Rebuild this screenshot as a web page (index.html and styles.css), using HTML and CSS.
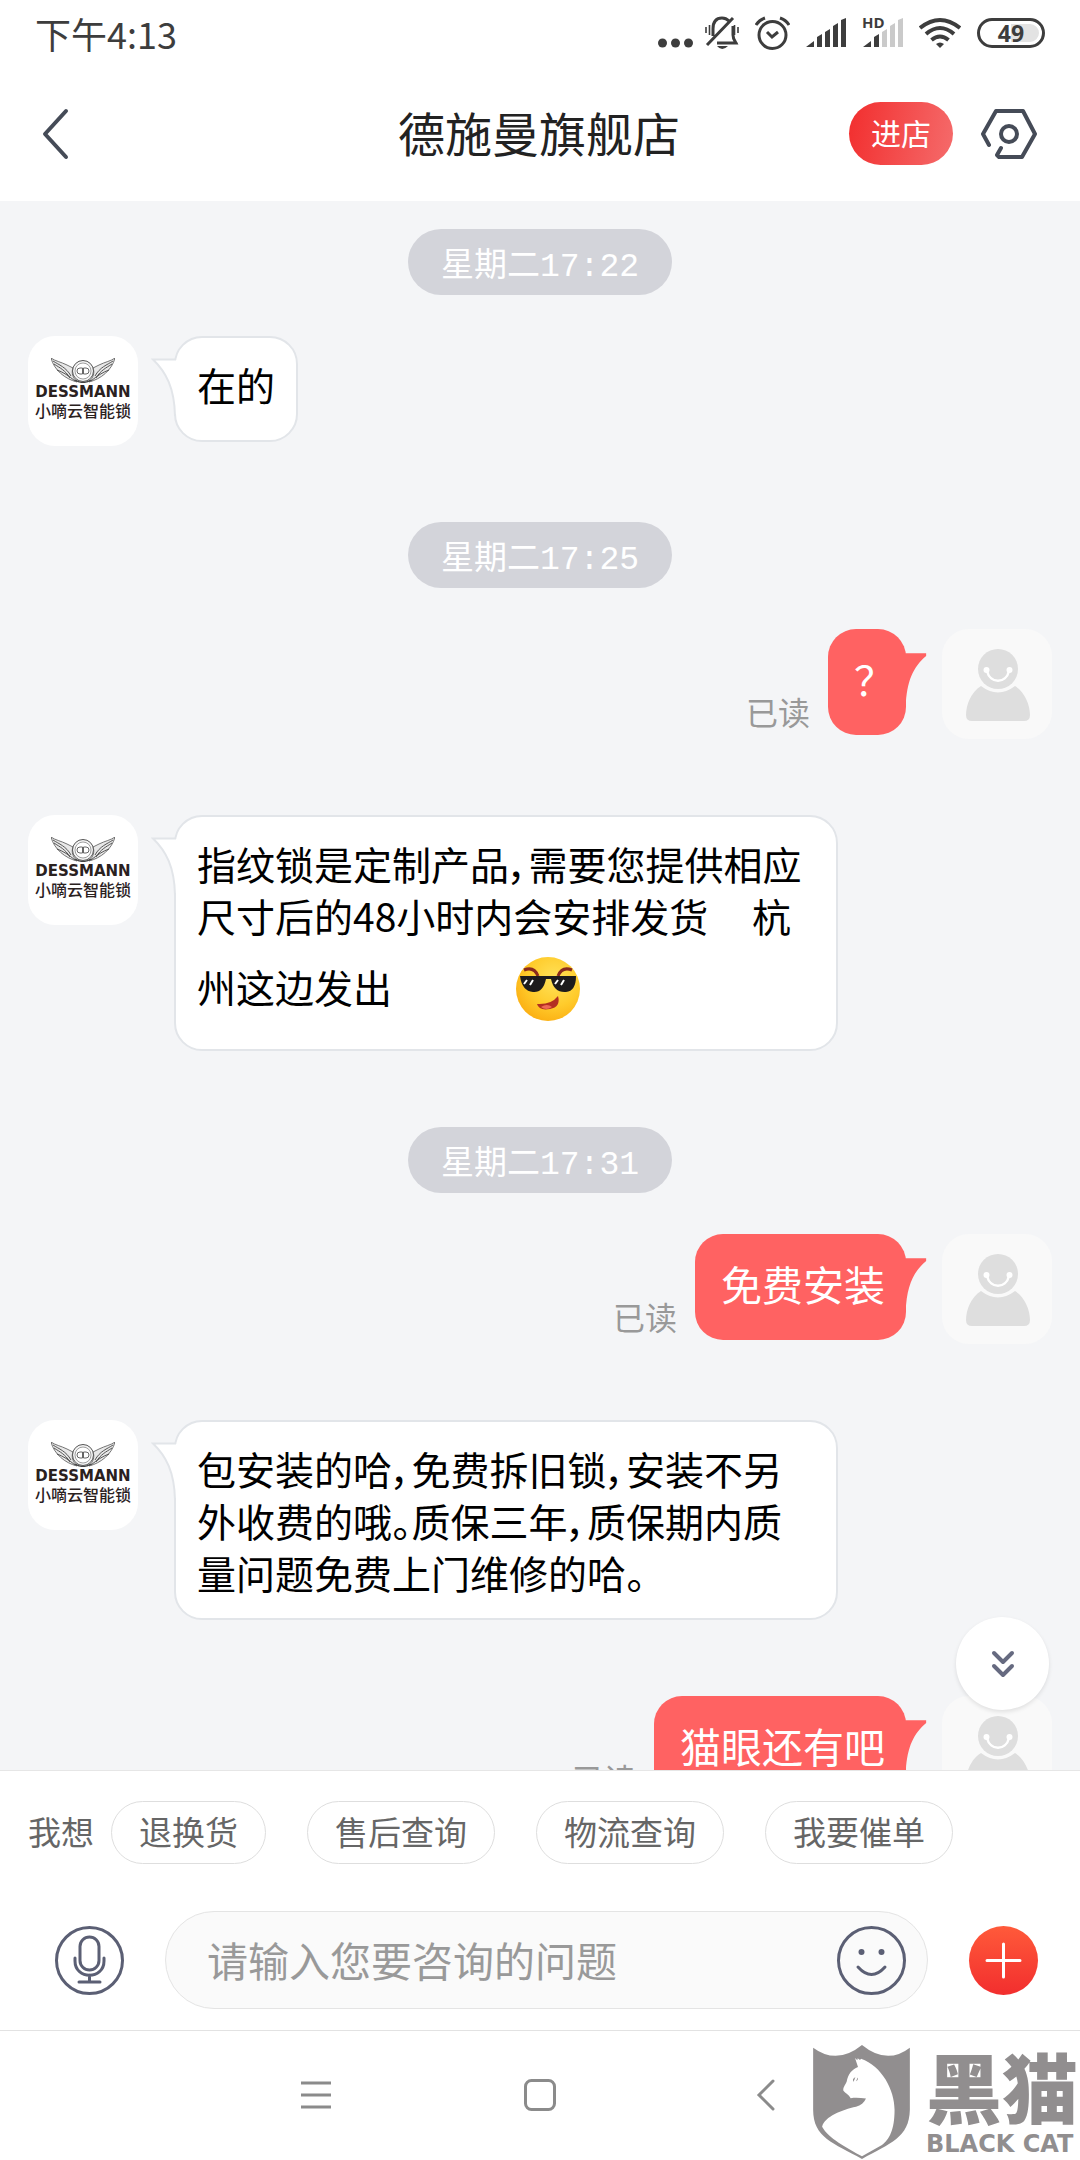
FILE: index.html
```html
<!DOCTYPE html>
<html lang="zh-CN">
<head>
  <meta charset="UTF-8">
  <meta name="viewport" content="width=device-width, initial-scale=1.0">
  <title>德施曼旗舰店</title>
  <link rel="stylesheet" href="styles.css">
</head>
<body>
  <!-- Shared shapes -->
  <svg class="sprite" aria-hidden="true">
    <symbol id="wings" viewBox="0 0 64 25">
      <g fill="#e8e8e8" stroke="#555" stroke-width="0.8">
        <path d="M0 0C4 3 10 4 16 7L22 10C20 15 22 20 26 24C14 21 3 12 0 0Z"/>
        <path d="M64 0C60 3 54 4 48 7L42 10C44 15 42 20 38 24C50 21 61 12 64 0Z"/>
      </g>
      <g fill="none" stroke="#444" stroke-width="0.9">
        <path d="M2 3C8 7 15 9 20 18M3 6C9 10 14 12 19 20M62 3C56 7 49 9 44 18M61 6C55 10 50 12 45 20M6 12C12 14 18 18 24 23M58 12C52 14 46 18 40 23"/>
      </g>
      <circle cx="32" cy="13" r="10.5" fill="#f4f4f4" stroke="#555" stroke-width="1"/>
      <circle cx="32" cy="13" r="8" fill="#fff" stroke="#888" stroke-width="0.8"/>
      <path d="M31.500 10H29a3 3 0 0 0 0 6h2.500ZM32.500 10H35a3 3 0 0 1 0 6h-2.500Z" fill="none" stroke="#555" stroke-width="0.9"/>
      <path d="M24 22Q32 27 40 22" fill="none" stroke="#444" stroke-width="1.200"/>
    </symbol>
    <symbol id="user" viewBox="0 0 110 110">
      <circle cx="56" cy="40" r="20" fill="#dedede"/>
      <path d="M39 57Q56 70 73 57C83 63 88 76 88 86Q88 92 82 92H30Q24 92 24 86C24 76 29 63 39 57Z" fill="#dedede"/>
      <path d="M45 42C48 55 64 55 67 42" fill="none" stroke="#fff" stroke-width="2.500"/>
      <circle cx="44.500" cy="41" r="3" fill="#fff"/>
      <circle cx="67.500" cy="41" r="3" fill="#fff"/>
    </symbol>
    <symbol id="tail-left" viewBox="0 0 28 60">
      <path d="M28 2H2C15 14 23 28 24 56H28Z" fill="#fff"/>
      <path d="M25 1.500H2C15 14 23.500 30 24 58" fill="none" stroke="#e2e5e9" stroke-width="2"/>
    </symbol>
    <symbol id="tail-right" viewBox="0 0 28 60">
      <path d="M0 0H26V3C12 15 5 30 4 58H0Z" fill="#ff6262"/>
    </symbol>
  </svg>

  <div class="app">
    <header>
      <div class="status-bar">
        <span class="clock">下午4:13</span>
        <div class="status-icons">
          <svg width="39" height="34" viewBox="0 0 39 34" fill="#3d3d3d"><circle cx="4.500" cy="27" r="4.500"/><circle cx="17.500" cy="27" r="4.500"/><circle cx="30.500" cy="27" r="4.500"/></svg>
          <svg width="34" height="34" viewBox="0 0 34 34" fill="none" stroke="#3d3d3d" stroke-width="3">
            <path d="M8 20V13C8 5 12 2 17 2C20 2 22 3 24 5M28 10V19C28 23 30 25 31 27H12M2 29L28 2"/>
            <path d="M1 11V17M4.500 9V19M29.500 9V19M33 11V17" stroke-width="1.600"/>
            <path d="M12 30H23Q17 36 12 30Z" fill="#3d3d3d" stroke="none"/>
          </svg>
          <svg width="35" height="34" viewBox="0 0 35 34" fill="none" stroke="#3d3d3d" stroke-width="3">
            <circle cx="17.500" cy="19" r="13.500"/>
            <path d="M12 16L17 21L23 16M1 9Q4 4 10 2M34 9Q31 4 25 2"/>
          </svg>
          <svg width="40" height="34" viewBox="0 0 40 34" fill="#3d3d3d"><path d="M0 31L8 25V31ZM11 21L16 18V31H11ZM19 16L24 13V31H19ZM27 10L32 7V31H27ZM35 4L40 2V31H35Z"/></svg>
          <svg width="41" height="34" viewBox="0 0 41 34" fill="#3d3d3d">
            <path d="M1 31L9 25V31ZM12 21L17 18V31H12Z"/>
            <path d="M20 16L25 13V31H20ZM28 10L33 7V31H28ZM36 4L41 2V31H36Z" fill="#cacaca"/>
            <rect width="23" height="14" fill="#fff"/>
            <text x="0" y="12" class="hd">HD</text>
          </svg>
          <svg width="42" height="34" viewBox="0 0 42 34" fill="none" stroke="#3d3d3d" stroke-width="4">
            <path d="M1 12Q21 -4 41 12M7 18Q21 6 35 18M12.500 24Q21 17 29.500 24"/>
            <path d="M17 28Q21 25 25 28L21 32Z" fill="#3d3d3d" stroke="none"/>
          </svg>
          <span class="battery">49</span>
        </div>
      </div>
      <nav class="title-bar">
        <button class="back" aria-label="返回">
          <svg width="28" height="52" viewBox="0 0 28 52" fill="none" stroke="#454b57" stroke-width="4" stroke-linecap="round" stroke-linejoin="round"><path d="M25 3L4 26L25 49"/></svg>
        </button>
        <h1>德施曼旗舰店</h1>
        <div class="title-actions">
          <a class="shop" href="#">进店</a>
          <button aria-label="设置">
            <svg width="56" height="52" viewBox="0 0 56 52" fill="none" stroke="#454b57" stroke-width="4" stroke-linecap="round" stroke-linejoin="round">
              <path d="M8 37L2 26L15 3H42L54 26L41 49H18L16 47L20 40"/>
              <circle cx="28" cy="26" r="8"/>
            </svg>
          </button>
        </div>
      </nav>
    </header>

    <main class="chat">
      <time class="time">星期二<span>17:22</span></time>

      <div class="message">
        <div class="avatar shop-avatar"><svg width="64" height="25"><use href="#wings"/></svg><b>DESSMANN</b><span>小嘀云智能锁</span></div>
        <div class="bubble"><svg class="tail"><use href="#tail-left"/></svg>在的</div>
      </div>

      <time class="time">星期二<span>17:25</span></time>

      <div class="message mine">
        <span class="read">已读</span>
        <div class="bubble"><svg class="tail"><use href="#tail-right"/></svg>？</div>
        <svg class="avatar"><use href="#user"/></svg>
      </div>

      <div class="message">
        <div class="avatar shop-avatar"><svg width="64" height="25"><use href="#wings"/></svg><b>DESSMANN</b><span>小嘀云智能锁</span></div>
        <div class="bubble"><svg class="tail"><use href="#tail-left"/></svg>指纹锁是定制产品，需要您提供相应尺寸后的48小时内会安排发货&nbsp;&nbsp;&nbsp;&nbsp;&nbsp;杭州这边发出<svg class="emoji" viewBox="0 0 64 64">
            <defs>
              <radialGradient id="face" cx="0.6" cy="0.35" r="0.7"><stop offset="0" stop-color="#ffe25a"/><stop offset="0.600" stop-color="#ffcb2b"/><stop offset="1" stop-color="#fbae12"/></radialGradient>
            </defs>
            <circle cx="32" cy="32" r="32" fill="url(#face)"/>
            <path d="M8 13Q18 9 22 19M56 13Q46 9 42 19" fill="none" stroke="#8a2a1c" stroke-width="3"/>
            <path d="M4 19H60Q60 34 50 35Q38 36 35 22H30Q27 36 17 35Q6 34 4 19Z" fill="#1d1b1c"/>
            <path d="M8 27L11 23M14 28L17 23M39 27L42 23M45 28L48 23" stroke="#fff" stroke-width="2"/>
            <path d="M21 47Q35 48 42 39Q45 50 34 52Q23 54 21 47Z" fill="#b32f22"/>
            <path d="M25 50Q31 46 36 50Q30 54 25 50Z" fill="#ee6a55"/>
          </svg></div>
      </div>

      <time class="time">星期二<span>17:31</span></time>

      <div class="message mine">
        <span class="read">已读</span>
        <div class="bubble"><svg class="tail"><use href="#tail-right"/></svg>免费安装</div>
        <svg class="avatar"><use href="#user"/></svg>
      </div>

      <div class="message">
        <div class="avatar shop-avatar"><svg width="64" height="25"><use href="#wings"/></svg><b>DESSMANN</b><span>小嘀云智能锁</span></div>
        <div class="bubble"><svg class="tail"><use href="#tail-left"/></svg>包安装的哈，免费拆旧锁，安装不另外收费的哦。质保三年，质保期内质量问题免费上门维修的哈。</div>
      </div>

      <div class="message mine">
        <span class="read">已读</span>
        <div class="bubble"><svg class="tail"><use href="#tail-right"/></svg>猫眼还有吧</div>
        <svg class="avatar"><use href="#user"/></svg>
      </div>

      <button class="to-bottom" aria-label="最新消息">
        <svg width="26" height="30" viewBox="0 0 26 30" fill="none" stroke="#666a80" stroke-width="4" stroke-linecap="round" stroke-linejoin="round"><path d="M4 4L13 13L22 4M4 17L13 26L22 17"/></svg>
      </button>
    </main>

    <section class="composer">
      <div class="quick">
        <span>我想</span>
        <div class="chips">
          <button>退换货</button>
          <button>售后查询</button>
          <button>物流查询</button>
          <button>我要催单</button>
        </div>
      </div>
      <form class="entry">
        <button type="button" aria-label="语音">
          <svg width="69" height="69" viewBox="0 0 69 69" fill="none" stroke="#5b5f74" stroke-width="3" stroke-linecap="round">
            <circle cx="34.500" cy="34.500" r="33"/>
            <rect x="25" y="11" width="19" height="33" rx="9.500"/>
            <path d="M20 32V35C20 54 49 54 49 35V32M34.500 49V56M24 56H45"/>
          </svg>
        </button>
        <div class="field">
          <input type="text" aria-label="咨询内容" placeholder="请输入您要咨询的问题">
          <button type="button" aria-label="表情">
            <svg width="69" height="69" viewBox="0 0 69 69" fill="none" stroke="#5b5f74" stroke-width="3" stroke-linecap="round">
              <circle cx="34.500" cy="34.500" r="33"/>
              <path d="M21 41Q34.500 56 48 41"/>
              <g fill="#5b5f74" stroke="none"><circle cx="24.500" cy="26" r="3"/><circle cx="44.500" cy="26" r="3"/></g>
            </svg>
          </button>
        </div>
        <button type="button" class="plus" aria-label="更多">
          <svg width="37" height="37" viewBox="0 0 37 37" stroke="#fff" stroke-width="3" stroke-linecap="round"><path d="M18.500 2V35M2 18.500H35"/></svg>
        </button>
      </form>
    </section>

    <footer class="nav-keys">
      <button aria-label="菜单"><svg width="32" height="32" viewBox="0 0 32 32" stroke="#8b8b8b" stroke-width="3"><path d="M1 4H31M1 16H31M1 28H31"/></svg></button>
      <button aria-label="主页"><svg width="32" height="32" viewBox="0 0 32 32" fill="none" stroke="#8b8b8b" stroke-width="3"><rect x="1.500" y="1.500" width="29" height="29" rx="6"/></svg></button>
      <button aria-label="后退"><svg width="32" height="32" viewBox="0 0 32 32" fill="none" stroke="#8b8b8b" stroke-width="3" stroke-linecap="round"><path d="M25 2L11 16L25 30"/></svg></button>
      <div class="watermark">
        <svg width="97" height="114" viewBox="93 45 291 343">
          <path d="M93 53Q165 106 240 45Q315 106 384 53V240C382 325 325 340 240 388C155 340 93 325 93 240Z" fill="#918e8f"/>
          <path d="M219 84L226 91L227 85L234 90L237 86C300 108 338 180 338 240C338 300 322 330 300 346L240 380C195 355 138 325 120 291C128 260 180 240 222 231C236 227 247 218 252 206C235 204 220 203 206 205C200 195 190 190 184 183C182 172 190 166 194 155C198 132 210 118 228 111Z" fill="#fff"/>
          <path d="M213 156V147L220 141Q218 150 213 156ZM222 154L227 143Q230 150 222 154Z" fill="#918e8f"/>
        </svg>
        <div class="watermark-name">
          <strong>黑猫</strong>
          <span>BLACK CAT</span>
        </div>
      </div>
    </footer>
  </div>
</body>
</html>
```
FILE: styles.css
```css
* { margin: 0; padding: 0; box-sizing: border-box; }
body {
  font-family: "Noto Sans CJK SC", "Noto Sans", sans-serif;
  background: #fff;
  color: #222;
}
button {
  display: flex;
  align-items: center;
  justify-content: center;
  border: none;
  background: none;
  font: inherit;
  color: inherit;
  cursor: pointer;
}
svg { display: block; flex: none; }
.sprite { position: absolute; width: 0; height: 0; }
.app {
  display: flex;
  flex-direction: column;
  height: 100vh;
}

/* Status bar and title */
.status-bar {
  display: flex;
  align-items: center;
  justify-content: space-between;
  height: 66px;
  padding: 0 35px;
}
.clock {
  font-size: 36px;
  line-height: 66px;
  color: #3d3d3d;
}
.status-icons {
  display: flex;
  align-items: center;
  gap: 16px;
}
.status-icons svg:first-child { margin-right: -8px; }
.hd { font: bold 15px "Open Sans", sans-serif; }
.battery {
  width: 68px;
  height: 30px;
  border: 3px solid #3d3d3d;
  border-radius: 15px;
  box-shadow: inset 0 0 0 3px #fff;
  background: linear-gradient(to right, #fff 50%, #e3e3e3 50%);
  font: bold 23px/24px "Open Sans", sans-serif;
  color: #3d3d3d;
  text-align: center;
}
.title-bar {
  display: grid;
  grid-template-columns: 1fr auto 1fr;
  align-items: center;
  height: 135px;
  padding: 0 43px 0 41px;
}
.back { justify-self: start; }
h1 {
  padding-bottom: 4px;
  font-size: 47px;
  font-weight: 400;
  line-height: 68px;
}
.title-actions {
  display: flex;
  align-items: center;
  justify-content: flex-end;
  gap: 28px;
}
.shop {
  padding: 0 22px 2px;
  border-radius: 32px;
  background: linear-gradient(100deg, #f22e2e, #f56b6b);
  color: #fff;
  font-size: 30px;
  line-height: 61px;
  text-decoration: none;
}

/* Messages */
.chat {
  position: relative;
  flex: 1;
  min-height: 0;
  overflow: hidden;
  padding: 28px;
  background: #f4f5f7;
}
.time {
  display: flex;
  align-items: baseline;
  width: fit-content;
  height: 66px;
  margin: 0 auto 41px;
  padding: 0 33px;
  border-radius: 33px;
  background: #d3d4da;
  color: #fff;
  font-size: 33px;
  line-height: 66px;
}
.time span { font-family: "Liberation Mono", monospace; }
.message {
  display: flex;
  align-items: flex-start;
  margin-bottom: 76px;
}
.mine { justify-content: flex-end; }
.avatar {
  flex: none;
  width: 110px;
  height: 110px;
  border-radius: 27px;
  background: #f9f9f9;
}
.shop-avatar {
  display: flex;
  flex-direction: column;
  align-items: center;
  padding-top: 22px;
  background: #fff;
  color: #2a211e;
}
.shop-avatar b {
  font: bold 15px/18px "DejaVu Sans", sans-serif;
}
.shop-avatar span {
  font-size: 16px;
  font-weight: 500;
  line-height: 18px;
}
.bubble {
  position: relative;
  min-width: 78px;
  max-width: 664px;
  min-height: 106px;
  margin-left: 36px;
  padding: 20px 21px;
  border: 2px solid #e2e5e9;
  border-radius: 28px;
  background: #fff;
  color: #000;
  font-size: 39px;
  line-height: 52px;
  font-feature-settings: "palt";
}
.tail {
  position: absolute;
  top: 20px;
  left: -25px;
  width: 28px;
  height: 60px;
}
.mine .bubble {
  margin: 0 36px 0 18px;
  padding: 23px 21px 31px 26px;
  border: none;
  background: #ff6262;
  color: #fff;
  font-size: 41px;
}
.mine .tail {
  top: 22px;
  left: auto;
  right: -22px;
  width: 26px;
}
.read {
  margin-top: 59px;
  color: #999;
  font-size: 32px;
  line-height: 46px;
}
.emoji {
  display: inline-block;
  width: 64px;
  height: 64px;
  margin: 16px 0 8px 124px;
  vertical-align: -26px;
}
.to-bottom {
  position: absolute;
  right: 31px;
  bottom: 60px;
  width: 93px;
  height: 93px;
  border-radius: 50%;
  background: #fff;
  box-shadow: 0 2px 4px rgba(0, 0, 0, 0.1);
}

/* Composer */
.composer {
  border-top: 1px solid #e6e6e6;
  border-bottom: 1px solid #e2e2e2;
}
.quick {
  display: flex;
  align-items: center;
  gap: 17px;
  padding: 30px 28px 0;
  color: #666;
  font-size: 33px;
}
.quick span { padding-bottom: 3px; }
.chips {
  display: flex;
  gap: 41px;
}
.chips button {
  height: 63px;
  padding: 0 27px 3px;
  border: 1px solid #dedede;
  border-radius: 32px;
}
.entry {
  display: flex;
  align-items: center;
  gap: 41px;
  padding: 47px 42px 21px 55px;
}
.field {
  display: flex;
  flex: 1;
  align-items: center;
  height: 98px;
  padding: 0 21px 0 41px;
  border: 1px solid #e4e4e4;
  border-radius: 49px;
  background: #fafafa;
}
.field input {
  flex: 1;
  min-width: 0;
  padding-bottom: 3px;
  border: none;
  outline: none;
  background: none;
  color: #222;
  font: inherit;
  font-size: 41px;
}
.field input::placeholder { color: #999; }
.plus {
  width: 69px;
  height: 69px;
  border-radius: 50%;
  background: linear-gradient(#ff5a3a, #f22e2e);
}

/* System keys */
.nav-keys {
  position: relative;
  display: flex;
  align-items: center;
  justify-content: center;
  gap: 192px;
  height: 129px;
  padding-bottom: 2px;
}
.watermark {
  position: absolute;
  right: 2px;
  bottom: 1px;
  display: flex;
  align-items: flex-end;
  gap: 16px;
  color: #918e8f;
}
.watermark-name {
  display: flex;
  flex-direction: column;
  gap: 5px;
}
.watermark strong {
  font-size: 76px;
  font-weight: 900;
  line-height: 78px;
}
.watermark span {
  font: bold 24px/30px "DejaVu Sans", sans-serif;
}
```
